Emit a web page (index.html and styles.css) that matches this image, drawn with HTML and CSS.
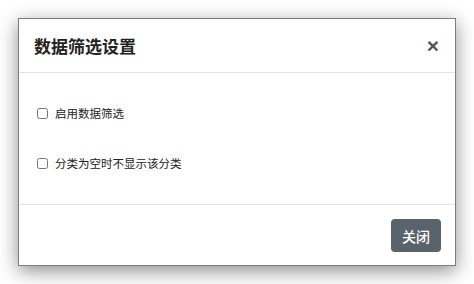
FILE: index.html
```html
<!DOCTYPE html>
<html lang="zh">
<head>
<meta charset="utf-8">
<link rel="stylesheet" href="styles.css">
</head>
<body>
<div class="stage">
  <div class="modal">
    <div class="modal-header">
      <h4 class="modal-title">数据筛选设置</h4>
      <span class="close">×</span>
    </div>
    <div class="modal-body">
      <label class="check"><input type="checkbox"><span>启用数据筛选</span></label>
      <label class="check"><input type="checkbox"><span>分类为空时不显示该分类</span></label>
    </div>
    <div class="modal-footer">
      <button class="btn">关闭</button>
    </div>
  </div>
</div>
</body>
</html>
```
FILE: styles.css
```css
html, body {
  margin: 0;
  padding: 0;
  background: #ffffff;
  font-family: "Noto Sans CJK SC", "Liberation Sans", sans-serif;
  color: #333;
}
.stage {
  padding: 18px;
}
.modal {
  width: 436px;
  height: 246px;
  background: #fff;
  border: 1px solid #7d7d7d;
  box-shadow: 0 5px 18px rgba(0,0,0,0.45);
  display: flex;
  flex-direction: column;
}
.modal-header {
  display: flex;
  align-items: center;
  justify-content: space-between;
  padding: 14px 16px 14px 15px;
  border-bottom: 1px solid #e5e5e5;
}
.modal-title {
  margin: 0;
  font-size: 17px;
  line-height: 25px;
  font-weight: 700;
  color: #222;
}
.close {
  font-family: "Liberation Sans", sans-serif;
  font-size: 21px;
  font-weight: 700;
  line-height: 20px;
  color: #555;
}
.modal-body {
  flex: 1;
  padding: 32px 15px 0 18px;
  display: flex;
  flex-direction: column;
  gap: 34px;
}
.check {
  display: flex;
  align-items: center;
  gap: 7px;
  font-size: 11.5px;
  line-height: 16px;
  color: #222;
}
.check input {
  margin: 0;
  width: 11px;
  height: 11px;
}
.modal-footer {
  display: flex;
  justify-content: flex-end;
  padding: 14px 14px 13px;
  border-top: 1px solid #e5e5e5;
}
.btn {
  width: 50px;
  height: 33px;
  border: none;
  border-radius: 4px;
  background: #59636b;
  color: #fff;
  font-family: "Noto Sans CJK SC", sans-serif;
  font-size: 14px;
  font-weight: 500;
  padding: 0;
}
```
